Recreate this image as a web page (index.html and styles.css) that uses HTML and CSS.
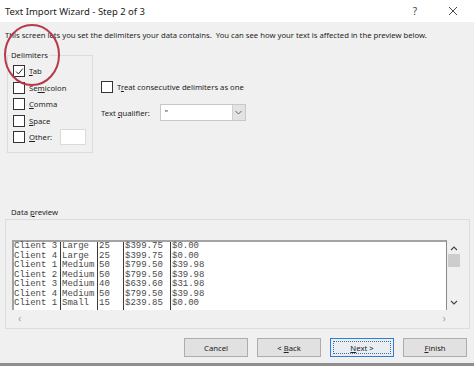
FILE: index.html
```html
<!DOCTYPE html>
<html lang="en">
<head>
    <meta charset="UTF-8">
    <title>Text Import Wizard - Step 2 of 3</title>
    <link rel="stylesheet" href="styles.css">
</head>
<body>
<div class="window">
    <!-- Titelleiste -->
    <div class="titlebar">
        <span class="title">Text Import Wizard - Step 2 of 3</span>
        <span class="help">?</span>
        <svg class="close" width="10" height="10" viewBox="0 0 10 10">
            <path d="M1 1 L9 9 M9 1 L1 9" stroke="#333" stroke-width="0.9" fill="none"/>
        </svg>
    </div>

    <p class="intro">This screen lets you set the delimiters your data contains.&nbsp; You can see how your text is affected in the preview below.</p>

    <div class="options">
        <fieldset class="group">
            <legend>Delimiters</legend>
            <div class="check-row">
                <span class="box">
                    <svg width="9" height="9" viewBox="0 0 9 9"><path d="M1.2 4.6 L3.4 7 L7.8 1.6" stroke="#222" stroke-width="1" fill="none"/></svg>
                </span>
                <span><u>T</u>ab</span>
            </div>
            <div class="check-row"><span class="box"></span><span>Se<u>m</u>icolon</span></div>
            <div class="check-row"><span class="box"></span><span><u>C</u>omma</span></div>
            <div class="check-row"><span class="box"></span><span><u>S</u>pace</span></div>
            <div class="check-row">
                <span class="box"></span><span><u>O</u>ther:</span>
                <span class="other-input"></span>
            </div>
        </fieldset>

        <div class="side">
            <div class="check-row treat"><span class="box"></span><span>T<u>r</u>eat consecutive delimiters as one</span></div>
            <div class="qualifier">
                <span>Text <u>q</u>ualifier:</span>
                <div class="select">
                    <span class="select-value">"</span>
                    <span class="select-arrow">
                        <svg width="7" height="5" viewBox="0 0 7 5"><path d="M0.5 1 L3.5 4 L6.5 1" stroke="#666" stroke-width="1" fill="none"/></svg>
                    </span>
                </div>
            </div>
        </div>
    </div>

    <p class="preview-label">Data <u>p</u>review</p>

    <!-- Vorschau der Daten -->
    <div class="preview-frame">
        <div class="preview">
            <div class="grid">
                <div class="col c1">
                    <div>Client 3</div><div>Client 4</div><div>Client 1</div><div>Client 2</div><div>Client 3</div><div>Client 4</div><div>Client 1</div>
                </div>
                <div class="col c2">
                    <div>Large</div><div>Large</div><div>Medium</div><div>Medium</div><div>Medium</div><div>Medium</div><div>Small</div>
                </div>
                <div class="col c3">
                    <div>25</div><div>25</div><div>50</div><div>50</div><div>40</div><div>50</div><div>15</div>
                </div>
                <div class="col c4">
                    <div>$399.75</div><div>$399.75</div><div>$799.50</div><div>$799.50</div><div>$639.60</div><div>$799.50</div><div>$239.85</div>
                </div>
                <div class="col c5">
                    <div>$0.00</div><div>$0.00</div><div>$39.98</div><div>$39.98</div><div>$31.98</div><div>$39.98</div><div>$0.00</div>
                </div>
            </div>
            <div class="vscroll">
                <svg width="8" height="5" viewBox="0 0 8 5"><path d="M1 4 L4 1 L7 4" stroke="#444" stroke-width="1.1" fill="none"/></svg>
                <span class="thumb"></span>
                <span class="vspace"></span>
                <svg width="8" height="5" viewBox="0 0 8 5"><path d="M1 1 L4 4 L7 1" stroke="#444" stroke-width="1.1" fill="none"/></svg>
            </div>
        </div>
        <div class="hscroll">
            <span>&lsaquo;</span>
            <span>&rsaquo;</span>
        </div>
    </div>

    <div class="buttons">
        <button class="btn">Cancel</button>
        <button class="btn">&lt; <u>B</u>ack</button>
        <button class="btn default"><span class="focus"><u>N</u>ext &gt;</span></button>
        <button class="btn"><u>F</u>inish</button>
    </div>

    <!-- roter Kreis als Markierung -->
    <svg class="mark" width="60" height="66" viewBox="0 0 60 66">
        <ellipse cx="30" cy="33" rx="27" ry="30" stroke="#b8384a" stroke-width="2" fill="none"/>
    </svg>
</div>
</body>
</html>
```

FILE: styles.css
```css
/* Grundlayout */
html, body {
    margin: 0;
    padding: 0;
}
body {
    font-family: "Noto Sans", "Liberation Sans", sans-serif;
    font-size: 7.7px;
    color: #1e1e1e;
}
.window {
    position: relative;
    width: 474px;
    height: 366px;
    box-sizing: border-box;
    background: #f0f0f0;
    border-bottom: 3px solid #8e8e8e;
    display: flex;
    flex-direction: column;
    overflow: hidden;
}
/* Titelleiste */
.titlebar {
    height: 22px;
    flex-shrink: 0;
    background: #fff;
    display: flex;
    align-items: center;
    padding-left: 5px;
}
.title {
    font-size: 9.5px;
    color: #222;
}
.help {
    margin-left: auto;
    font-size: 10px;
    color: #444;
}
.close {
    margin: 0 16px 0 31px;
}
.intro {
    margin: 6px 0 0 5px;
    line-height: 14px;
    white-space: nowrap;
}
/* Optionen */
.options {
    display: flex;
    margin-top: 6px;
    height: 105px;
}
.group {
    margin: 0 0 0 7px;
    padding: 1px 0 5px 5px;
    width: 86px;
    box-sizing: border-box;
    border: 1px solid #dcdcdc;
    min-width: 0;
}
.group legend {
    padding: 0 1px;
    margin-left: -3px;
    line-height: 14px;
}
.check-row {
    display: flex;
    align-items: center;
    height: 16.5px;
    gap: 4px;
}
.box {
    width: 10px;
    height: 10px;
    border: 1px solid #333;
    background: #fff;
    flex-shrink: 0;
    display: flex;
    align-items: center;
    justify-content: center;
}
.other-input {
    width: 26px;
    height: 16px;
    margin-left: 4px;
    background: #fff;
    border: 1px solid #dadada;
    box-sizing: border-box;
}
.side {
    margin-left: 8px;
}
.treat {
    margin-top: 33px;
    height: 12px;
}
.qualifier {
    display: flex;
    align-items: center;
    gap: 10px;
    margin-top: 11px;
}
.select {
    width: 86px;
    height: 17px;
    box-sizing: border-box;
    background: #fff;
    border: 1px solid #c8c8c8;
    display: flex;
}
.select-value {
    flex: 1;
    padding-left: 4px;
    line-height: 14px;
}
.select-arrow {
    width: 12px;
    background: #e3e3e3;
    border-left: 1px solid #d0d0d0;
    display: flex;
    align-items: center;
    justify-content: center;
}
.preview-label {
    margin: 52px 0 0 11px;
    line-height: 14px;
}
/* Datenvorschau */
.preview-frame {
    margin-left: 5px;
    width: 465px;
    height: 110px;
    box-sizing: border-box;
    border: 1px solid #dcdcdc;
    padding: 20px 0 0 6px;
}
.preview {
    display: flex;
    height: 70px;
}
.grid {
    display: flex;
    width: 432px;
    background: #fff;
    border-top: 2px solid #a3a3a3;
    border-left: 2px solid #a3a3a3;
    border-right: 1px solid #8a8a8a;
    font-family: "Liberation Mono", monospace;
    font-size: 9px;
    line-height: 9.5px;
    color: #4a4a4a;
    white-space: nowrap;
}
.col {
    box-sizing: border-box;
    padding-left: 1px;
}
.col + .col {
    border-left: 1px solid #3a3a3a;
}
.c1 { width: 46px; padding-left: 0; }
.c2 { width: 37px; }
.c3 { width: 26px; }
.c4 { width: 47px; }
.c5 { flex: 1; }
.vscroll {
    width: 13px;
    display: flex;
    flex-direction: column;
    align-items: center;
    padding-top: 6px;
}
.thumb {
    width: 12px;
    height: 13px;
    margin-top: 3px;
    background: #cdcdcd;
}
.vspace {
    flex: 1;
}
.vscroll svg:last-child {
    margin-bottom: 5px;
}
.hscroll {
    display: flex;
    justify-content: space-between;
    width: 428px;
    padding: 0 0 0 6px;
    height: 16px;
    line-height: 15px;
    font-size: 11px;
    color: #a8a8a8;
}
/* Schaltflächen */
.buttons {
    display: flex;
    justify-content: flex-end;
    gap: 9px;
    margin: 9px 7px 0 0;
}
.btn {
    width: 64px;
    height: 19px;
    padding: 0;
    font-family: inherit;
    font-size: 7.7px;
    color: #222;
    background: #e1e1e1;
    border: 1px solid #adadad;
}
.btn.default {
    border-color: #2a7fd4;
    background: #e8eef4;
    padding: 2px;
}
.focus {
    display: flex;
    align-items: center;
    justify-content: center;
    height: 100%;
    border: 1px dotted #4a6a8a;
    box-sizing: border-box;
}
/* Markierung */
.mark {
    position: absolute;
    left: 2px;
    top: 22px;
}
```
